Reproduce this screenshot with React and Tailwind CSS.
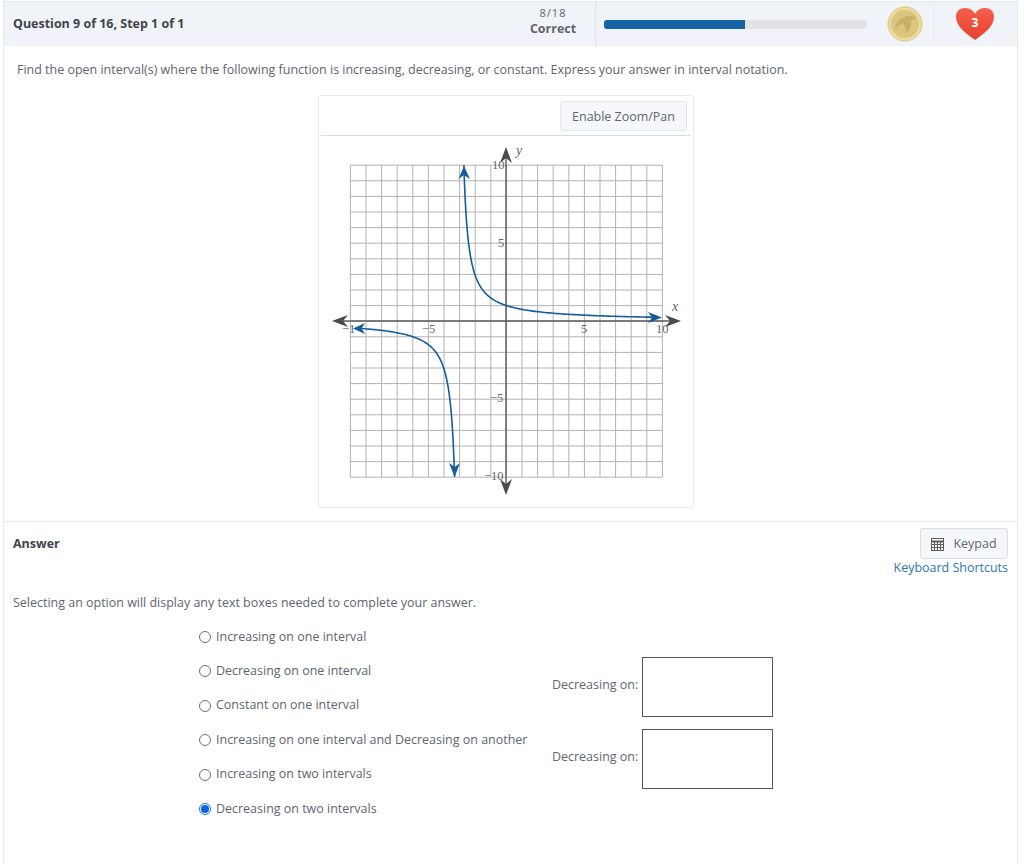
const X0 = 506
const Y0 = 321
const U = 15.6

const sx = (x) => X0 + x * U
const sy = (y) => Y0 - y * U

const curve = (from, to) => {
  const pts = []
  const n = 120
  for (let i = 0; i <= n; i++) {
    // more samples close to the asymptote at x = -3
    const t = i / n
    const x = from + (to - from) * t * t
    pts.push(`${sx(x).toFixed(2)},${sy(3 / (x + 3)).toFixed(2)}`)
  }
  return "M" + pts.join("L")
}

const ticks = Array.from({ length: 21 }, (_, i) => i - 10)

const Graph = () => (
  <svg viewBox="319 136 374 370" className="w-[374px] h-[370px] block">
    {ticks.map((t) => (
      <g key={t} stroke="#b2b2b2" strokeWidth="1">
        <line x1={sx(t) + 0.4} y1={sy(10)} x2={sx(t) + 0.4} y2={sy(-10)} />
        <line x1={sx(-10)} y1={sy(t) + 0.2} x2={sx(10)} y2={sy(t) + 0.2} />
      </g>
    ))}
    <g stroke="#5a5a5a" strokeWidth="1.4">
      <line x1="340" y1={Y0} x2="672" y2={Y0} />
      <line x1={X0} y1="154" x2={X0} y2="488" />
    </g>
    <g fill="#4a4a4a">
      <path d="M332 321 L348 315 L343 321 L348 327Z" />
      <path d="M681 321 L665 315 L670 321 L665 327Z" />
      <path d="M506 147 L500 163 L506 158 L512 163Z" />
      <path d="M506 495 L500 479 L506 484 L512 479Z" />
    </g>
    <g fill="none" stroke="#155d9c" strokeWidth="1.6">
      <path d={curve(-2.7, 9.6)} />
      <path d={curve(-3.3, -9.6)} />
    </g>
    <g fill="#155d9c">
      <path d="M464 166 L458.5 179 L464 175 L470 179Z" />
      <path d="M662 317.5 L648 312 L652 317.5 L648 323Z" />
      <path d="M454.7 477 L449 463 L454.7 467 L460 463Z" />
      <path d="M353 328.5 L365 323 L361.5 328.5 L365 334Z" />
    </g>
    <g fill="#666" fontFamily="'Liberation Serif', serif" fontSize="12.5">
      <text x="492" y="169">10</text>
      <text x="498" y="247">5</text>
      <text x="490" y="402">−5</text>
      <text x="484" y="480">−10</text>
      <text x="342" y="333">−1</text>
      <text x="422" y="333">−5</text>
      <text x="581" y="333">5</text>
      <text x="656" y="333">10</text>
      <text x="516" y="155" fontStyle="italic" fontSize="14">y</text>
      <text x="672" y="311" fontStyle="italic" fontSize="14">x</text>
    </g>
  </svg>
)

const Coin = () => (
  <svg width="36" height="36" viewBox="0 0 36 36">
    <circle cx="18" cy="18" r="17" fill="#efdc9d" stroke="#dcc67d" strokeWidth="1" />
    <circle cx="18" cy="18" r="14" fill="#dcc57c" />
    <path d="M8 23 C9 14 16 9 27 10 L29 13 L24 14 C25 18 23 23 19 28 C19 22 18 19 16 18 C13 18 10 20 8 23Z" fill="#c9b06a" />
  </svg>
)

const Heart = () => (
  <div className="relative w-[40px] h-[34px]">
    <svg width="40" height="34" viewBox="0 0 40 34">
      <defs>
        <linearGradient id="heartFill" x1="0" y1="0" x2="0" y2="1">
          <stop offset="0" stopColor="#f4604a" />
          <stop offset="1" stopColor="#e8402f" />
        </linearGradient>
      </defs>
      <path d="M20 33 C12 27 1 20 1 10 C1 4 5 1 10 1 C14 1 18 3 20 7 C22 3 26 1 30 1 C35 1 39 4 39 10 C39 20 28 27 20 33Z" fill="url(#heartFill)" />
    </svg>
    <span className="absolute inset-0 flex items-center justify-center pb-[3px] text-[12px] font-bold text-white">3</span>
  </div>
)

const Radio = ({ checked }) =>
  checked ? (
    <span className="w-[12px] h-[12px] rounded-full border border-[#1a73e8] flex items-center justify-center shrink-0">
      <span className="w-[8px] h-[8px] rounded-full bg-[#0b63e5]" />
    </span>
  ) : (
    <span className="w-[12px] h-[12px] rounded-full border border-[#6f6f6f] bg-white shrink-0" />
  )

const options = [
  "Increasing on one interval",
  "Decreasing on one interval",
  "Constant on one interval",
  "Increasing on one interval and Decreasing on another",
  "Increasing on two intervals",
  "Decreasing on two intervals",
]

const App = () => {
  return (
    <div className="w-[1024px] h-[864px] overflow-hidden bg-white text-[#60656f] text-[12.47px] font-['Open_Sans',sans-serif]">
      <div className="ml-[3px] mr-[6px] h-full border-l border-r border-[#e6e9ee] pt-px">
        <div className="flex items-center h-[45px] bg-[#f0f3f7] border-t border-[#e6e9ee]">
          <div className="flex-1 pl-[9px] font-bold text-[#3f444c]">Question 9 of 16, Step 1 of 1</div>
          <div className="w-[85px] h-full border-r border-[#e0e4ea] flex flex-col items-center justify-center pb-[7px] leading-[16px]">
            <span className="text-[11px] tracking-[1px]">8/18</span>
            <span className="font-bold">Correct</span>
          </div>
          <div className="ml-[8px] w-[263px] h-[9px] rounded-[3px] bg-[#e1e3e7] overflow-hidden">
            <div className="w-[141px] h-full bg-[#1565a5]" />
          </div>
          <div className="ml-[20px] w-[36px] h-[36px]">
            <Coin />
          </div>
          <div className="ml-[10px] w-[84px] h-full border-l border-[#e6e9ee] flex items-center justify-center pr-[1px]">
            <Heart />
          </div>
        </div>

        <p className="pl-[13px] pt-[15px] leading-[18px]">
          Find the open interval(s) where the following function is increasing, decreasing, or constant. Express your answer in interval notation.
        </p>

        <div className="mt-[16px] ml-[314px] w-[376px] h-[413px] border border-[#e8eaee] rounded-[3px]">
          <div className="mx-[2px] h-[40px] border-b border-[#d8dbe0] flex justify-end pt-[5px] pr-[4px]">
            <button className="w-[127px] h-[30px] pt-[2px] bg-[#f5f7fa] border border-[#e1e6ec] rounded-[3px] text-[#5f6772]">
              Enable Zoom/Pan
            </button>
          </div>
          <Graph />
        </div>

        <div className="mt-[13px] border-t border-[#e6e9ee] pt-[6px] pl-[9px] pr-[9px]">
          <div className="flex justify-between">
            <div className="pt-[7px] font-bold text-[#3f444c] leading-[18px]">Answer</div>
            <div className="flex flex-col items-end">
              <button className="w-[88px] h-[31px] pt-[1px] bg-[#f5f7fa] border border-[#d9dfe6] rounded-[3px] flex items-center justify-center gap-[9px] text-[#5f6772]">
                <svg width="13" height="13" viewBox="0 0 13 13" fill="none" stroke="#5d5d5d">
                  <rect x="0.5" y="0.5" width="12" height="12" />
                  <path d="M0.5 3.5H12.5" strokeWidth="2" />
                  <path d="M0.5 6.5H12.5M0.5 9.5H12.5M3.5 4V12.5M6.5 4V12.5M9.5 4V12.5" />
                </svg>
                Keypad
              </button>
              <a className="leading-[18px] text-[#2a76b5]">Keyboard Shortcuts</a>
            </div>
          </div>

          <p className="mt-[17px] leading-[18px]">Selecting an option will display any text boxes needed to complete your answer.</p>

          <div className="flex mt-[16px] ml-[186px]">
            <div className="w-[353px] flex flex-col gap-[16.4px]">
              {options.map((o, i) => (
                <label key={o} className="flex items-center gap-[5px] h-[18px]">
                  <Radio checked={i === 5} />
                  {o}
                </label>
              ))}
            </div>
            <div className="flex flex-col gap-[12px] mt-[29px]">
              {[0, 1].map((i) => (
                <div key={i} className="flex items-center gap-[4px]">
                  <span className="pb-[4px]">Decreasing on:</span>
                  <div className="w-[131px] h-[60px] border border-[#555] bg-white" />
                </div>
              ))}
            </div>
          </div>
        </div>
      </div>
    </div>
  )
}

export default App
